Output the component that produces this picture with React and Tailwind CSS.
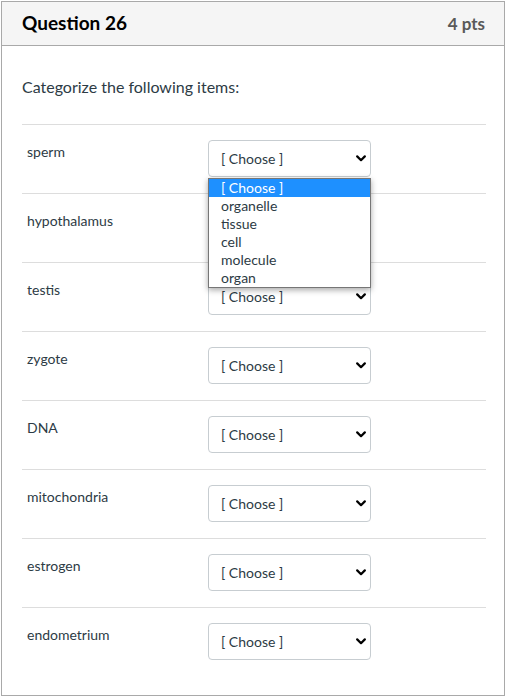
const items = [
  "sperm",
  "hypothalamus",
  "testis",
  "zygote",
  "DNA",
  "mitochondria",
  "estrogen",
  "endometrium",
];

const options = ["[ Choose ]", "organelle", "tissue", "cell", "molecule", "organ"];

function Chevron() {
  return (
    <svg width="10" height="7" viewBox="0 0 10 7" className="shrink-0">
      <path d="M1.2 1.4 L5 5.2 L8.8 1.4" fill="none" stroke="#000" strokeWidth="2.2" strokeLinecap="round" strokeLinejoin="round" />
    </svg>
  );
}

function FakeSelect({ open }) {
  return (
    <div className="relative w-[163px]">
      <div className="h-[37px] border border-[#c7cdd1] rounded-[4px] bg-white flex items-center justify-between pl-[12px] pr-[4px]">
        <span className="text-[14px] text-[#2d3b45]">[ Choose ]</span>
        <Chevron />
      </div>
      {open && (
        <ul className="absolute left-0 top-[38px] w-[163px] bg-white border border-[#767676] shadow-[0_2px_6px_rgba(0,0,0,0.35)] z-10 py-0">
          {options.map((o, i) => (
            <li
              key={o}
              className={
                "h-[18px] leading-[18px] pl-[12px] text-[14px] " +
                (i === 0 ? "bg-[#1e90ff] text-white" : "text-[#2d3b45]")
              }
            >
              {o}
            </li>
          ))}
        </ul>
      )}
    </div>
  );
}

export default function App() {
  return (
    <div className="p-px bg-white" style={{ fontFamily: "Lato, 'Noto Sans', sans-serif" }}>
      <div className="w-[504px] h-[695px] border border-[#a9a9a9] bg-white flex flex-col">
        {/* Header */}
        <div className="h-[44px] bg-[#f5f5f5] border-b border-[#a9a9a9] flex items-center justify-between pl-5 pr-[19px]">
          <h3 className="text-[19px] font-bold text-black">Question 26</h3>
          <span className="text-[17px] font-bold text-[#595959]">4 pts</span>
        </div>

        {/* Body */}
        <div className="pl-5 pr-[18px] pt-[29px]">
          <p className="text-[16px] leading-6 text-[#2d3b45] mb-[25px]">Categorize the following items:</p>
          {items.map((item, idx) => (
            <div key={item} className="border-t border-[#dddddd] flex h-[69px] pt-[15px]">
              <div className="w-[186px] pl-[5px] pt-[2px] text-[14px] leading-5 text-[#2d3b45]">{item}</div>
              <FakeSelect open={idx === 0} />
            </div>
          ))}
        </div>
      </div>
    </div>
  );
}
